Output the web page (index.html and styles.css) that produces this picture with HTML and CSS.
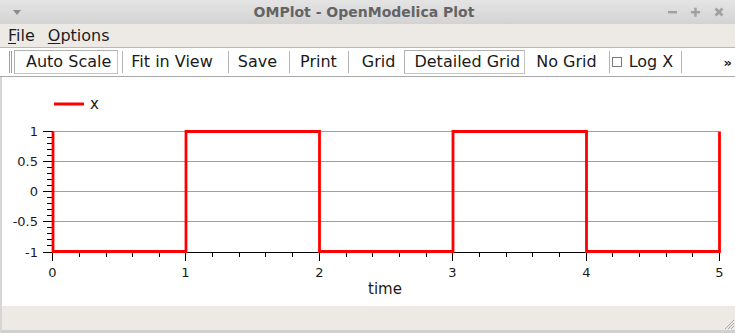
FILE: index.html
```html
<!DOCTYPE html>
<html>
<head>
<meta charset="utf-8">
<link rel="stylesheet" href="styles.css">
</head>
<body>
<div class="window">
  <div class="titlebar">
    <span class="win-menu"></span>
    <span class="title">OMPlot - OpenModelica Plot</span>
    <span class="win-controls">
      <svg width="64" height="14" viewBox="0 0 64 14">
        <rect x="4" y="6" width="9" height="2.4" fill="#a0a0a0"/>
        <rect x="27" y="6" width="9" height="2.4" fill="#a0a0a0"/>
        <rect x="30.3" y="2.7" width="2.4" height="9" fill="#a0a0a0"/>
        <path d="M51.5 3.5 L58.5 10.5 M58.5 3.5 L51.5 10.5" stroke="#a0a0a0" stroke-width="2.6"/>
      </svg>
    </span>
  </div>
  <div class="menubar">
    <span class="menu"><u>F</u>ile</span>
    <span class="menu"><u>O</u>ptions</span>
  </div>
  <div class="toolbar">
    <span class="handle"></span>
    <span class="tool btn auto">Auto Scale</span>
    <span class="sep"></span>
    <span class="tool fit">Fit in View</span>
    <span class="sep"></span>
    <span class="tool save">Save</span>
    <span class="sep"></span>
    <span class="tool print">Print</span>
    <span class="sep"></span>
    <span class="tool grid">Grid</span>
    <span class="tool btn detailed">Detailed Grid</span>
    <span class="tool nogrid">No Grid</span>
    <span class="sep"></span>
    <span class="tool check"><span class="box"></span>Log X</span>
    <span class="sep"></span>
    <span class="more">»</span>
  </div>
  <div class="plot">
    <svg class="chart" width="733" height="229" viewBox="2 77 733 229">
      <g class="grid-lines" stroke="#a0a0a0" stroke-width="1">
        <line x1="52" y1="131.5" x2="719" y2="131.5"/>
        <line x1="52" y1="161.5" x2="719" y2="161.5"/>
        <line x1="52" y1="191.5" x2="719" y2="191.5"/>
        <line x1="52" y1="221.5" x2="719" y2="221.5"/>
      </g>
      <g stroke="#000" stroke-width="1">
        <line x1="52.5" y1="131" x2="52.5" y2="253"/>
        <line x1="52" y1="252.5" x2="720" y2="252.5"/>
        <line x1="43" y1="131.5" x2="52" y2="131.5"/>
        <line x1="47" y1="137.5" x2="52" y2="137.5"/>
        <line x1="47" y1="143.5" x2="52" y2="143.5"/>
        <line x1="47" y1="149.5" x2="52" y2="149.5"/>
        <line x1="47" y1="155.5" x2="52" y2="155.5"/>
        <line x1="43" y1="161.5" x2="52" y2="161.5"/>
        <line x1="47" y1="167.5" x2="52" y2="167.5"/>
        <line x1="47" y1="173.5" x2="52" y2="173.5"/>
        <line x1="47" y1="179.5" x2="52" y2="179.5"/>
        <line x1="47" y1="185.5" x2="52" y2="185.5"/>
        <line x1="43" y1="191.5" x2="52" y2="191.5"/>
        <line x1="47" y1="197.5" x2="52" y2="197.5"/>
        <line x1="47" y1="203.5" x2="52" y2="203.5"/>
        <line x1="47" y1="209.5" x2="52" y2="209.5"/>
        <line x1="47" y1="215.5" x2="52" y2="215.5"/>
        <line x1="43" y1="221.5" x2="52" y2="221.5"/>
        <line x1="47" y1="227.5" x2="52" y2="227.5"/>
        <line x1="47" y1="233.5" x2="52" y2="233.5"/>
        <line x1="47" y1="239.5" x2="52" y2="239.5"/>
        <line x1="47" y1="245.5" x2="52" y2="245.5"/>
        <line x1="43" y1="252.5" x2="52" y2="252.5"/>
        <line x1="52.5" y1="253" x2="52.5" y2="261"/>
        <line x1="79.5" y1="253" x2="79.5" y2="257"/>
        <line x1="106.5" y1="253" x2="106.5" y2="257"/>
        <line x1="132.5" y1="253" x2="132.5" y2="257"/>
        <line x1="159.5" y1="253" x2="159.5" y2="257"/>
        <line x1="185.5" y1="253" x2="185.5" y2="261"/>
        <line x1="212.5" y1="253" x2="212.5" y2="257"/>
        <line x1="239.5" y1="253" x2="239.5" y2="257"/>
        <line x1="265.5" y1="253" x2="265.5" y2="257"/>
        <line x1="292.5" y1="253" x2="292.5" y2="257"/>
        <line x1="319.5" y1="253" x2="319.5" y2="261"/>
        <line x1="346.5" y1="253" x2="346.5" y2="257"/>
        <line x1="372.5" y1="253" x2="372.5" y2="257"/>
        <line x1="399.5" y1="253" x2="399.5" y2="257"/>
        <line x1="426.5" y1="253" x2="426.5" y2="257"/>
        <line x1="452.5" y1="253" x2="452.5" y2="261"/>
        <line x1="479.5" y1="253" x2="479.5" y2="257"/>
        <line x1="506.5" y1="253" x2="506.5" y2="257"/>
        <line x1="532.5" y1="253" x2="532.5" y2="257"/>
        <line x1="559.5" y1="253" x2="559.5" y2="257"/>
        <line x1="586.5" y1="253" x2="586.5" y2="261"/>
        <line x1="612.5" y1="253" x2="612.5" y2="257"/>
        <line x1="639.5" y1="253" x2="639.5" y2="257"/>
        <line x1="666.5" y1="253" x2="666.5" y2="257"/>
        <line x1="692.5" y1="253" x2="692.5" y2="257"/>
        <line x1="719.5" y1="253" x2="719.5" y2="261"/>
      </g>
      <g class="ylabels" text-anchor="end">
        <text x="38" y="136">1</text>
        <text x="38" y="166">0.5</text>
        <text x="38" y="196">0</text>
        <text x="38" y="226">-0.5</text>
        <text x="38" y="257">-1</text>
      </g>
      <g class="xlabels" text-anchor="middle">
        <text x="52.5" y="276.5">0</text>
        <text x="185.5" y="276.5">1</text>
        <text x="319.5" y="276.5">2</text>
        <text x="452.5" y="276.5">3</text>
        <text x="586.5" y="276.5">4</text>
        <text x="719.5" y="276.5">5</text>
      </g>
      <text class="axis-title" x="385" y="294" text-anchor="middle">time</text>
      <line x1="54" y1="104" x2="84" y2="104" stroke="#ff0000" stroke-width="3"/>
      <text class="legend" x="90" y="109">x</text>
      <path d="M53 131.5 L53 251.5 L186 251.5 L186 131.5 L319.5 131.5 L319.5 251.5 L453 251.5 L453 131.5 L586.5 131.5 L586.5 251.5 L719.5 251.5 L719.5 131.5" fill="none" stroke="#ff0000" stroke-width="2.8"/>
    </svg>
  </div>
  <div class="statusbar">
    <svg class="grip" width="12" height="12" viewBox="0 0 12 12">
      <path d="M11 2 L2 11 M11 5 L5 11 M11 8 L8 11" stroke="#a8a8a8" stroke-width="1"/>
    </svg>
  </div>
</div>
</body>
</html>
```

FILE: styles.css
```css
html, body {
  margin: 0;
  padding: 0;
  background: #ffffff;
}
body {
  width: 735px;
  height: 333px;
  overflow: hidden;
  font-family: "DejaVu Sans", sans-serif;
  color: #1a1a1a;
}
.window {
  display: flex;
  flex-direction: column;
  width: 735px;
  height: 333px;
}
.titlebar {
  height: 24px;
  flex: none;
  display: flex;
  align-items: center;
  background: linear-gradient(#e4e4e4, #d3d3d3);
}
.win-menu {
  width: 0;
  height: 0;
  margin-left: 13px;
  border-left: 4.5px solid transparent;
  border-right: 4.5px solid transparent;
  border-top: 5px solid #8c8c8c;
}
.title {
  flex: 1;
  text-align: center;
  font-family: "DejaVu Sans", sans-serif;
  font-weight: bold;
  font-size: 14px;
  color: #646464;
  margin-left: 43px;
}
.win-controls {
  display: flex;
  margin-right: 7px;
}
.menubar {
  height: 23px;
  flex: none;
  background: #edeae6;
  display: flex;
  align-items: center;
  gap: 13px;
  padding-left: 8px;
  font-size: 16px;
  color: #1e1e1e;
}
.menubar u {
  text-decoration-thickness: 1px;
  text-underline-offset: 2px;
}
.toolbar {
  height: 28px;
  flex: none;
  display: flex;
  align-items: center;
  background: #ffffff;
  border-top: 1px solid #b9b9b9;
  border-bottom: 1px solid #a9a9a9;
  font-size: 16px;
  color: #1a1a1a;
}
.handle {
  width: 1px;
  height: 22px;
  margin-left: 9px;
  margin-right: 2px;
  border-left: 1px solid #a0a0a0;
  border-right: 1px solid #a0a0a0;
}
.tool {
  line-height: 22px;
  border: 1px solid transparent;
  border-left: 0;
  border-right: 0;
}
.tool.btn {
  border: 1px solid #c4c4c4;
  border-top-color: #b0b0b0;
  border-left-color: #b0b0b0;
}
.auto { padding: 0 6px 0 11px; margin-right: 4px; }
.fit { padding: 0 15px 0 8px; }
.save { padding: 0 12px 0 9px; }
.print { padding: 0 11px 0 10px; }
.grid { padding: 0 9px 0 13px; }
.detailed { padding: 0 4px 0 9px; }
.nogrid { padding: 0 12px 0 11px; }
.sep {
  width: 1px;
  height: 22px;
  background: #b4b4b4;
}
.check {
  display: flex;
  align-items: center;
  padding: 0 8px 0 2px;
}
.box {
  width: 8px;
  height: 8px;
  border: 1px solid #7a7a7a;
  margin-right: 7px;
  background: #fff;
}
.more {
  margin-left: auto;
  margin-right: 3px;
  font-size: 13px;
  font-weight: bold;
}
.plot {
  height: 229px;
  flex: none;
  background: #ffffff;
  border-left: 2px solid #d6d6d6;
}
.chart {
  display: block;
}
.ylabels text, .xlabels text {
  font-family: "DejaVu Sans", sans-serif;
  font-size: 13px;
  fill: #1a1a1a;
}
.axis-title, .legend {
  font-family: "DejaVu Sans", sans-serif;
  font-size: 15px;
  fill: #1a1a1a;
}
.statusbar {
  height: 24px;
  flex: none;
  background: #edeae6;
  border-left: 2px solid #d6d6d6;
  border-bottom: 3px solid #d0d0d0;
  display: flex;
  justify-content: flex-end;
  align-items: flex-end;
}
.grip {
  display: block;
}
```
